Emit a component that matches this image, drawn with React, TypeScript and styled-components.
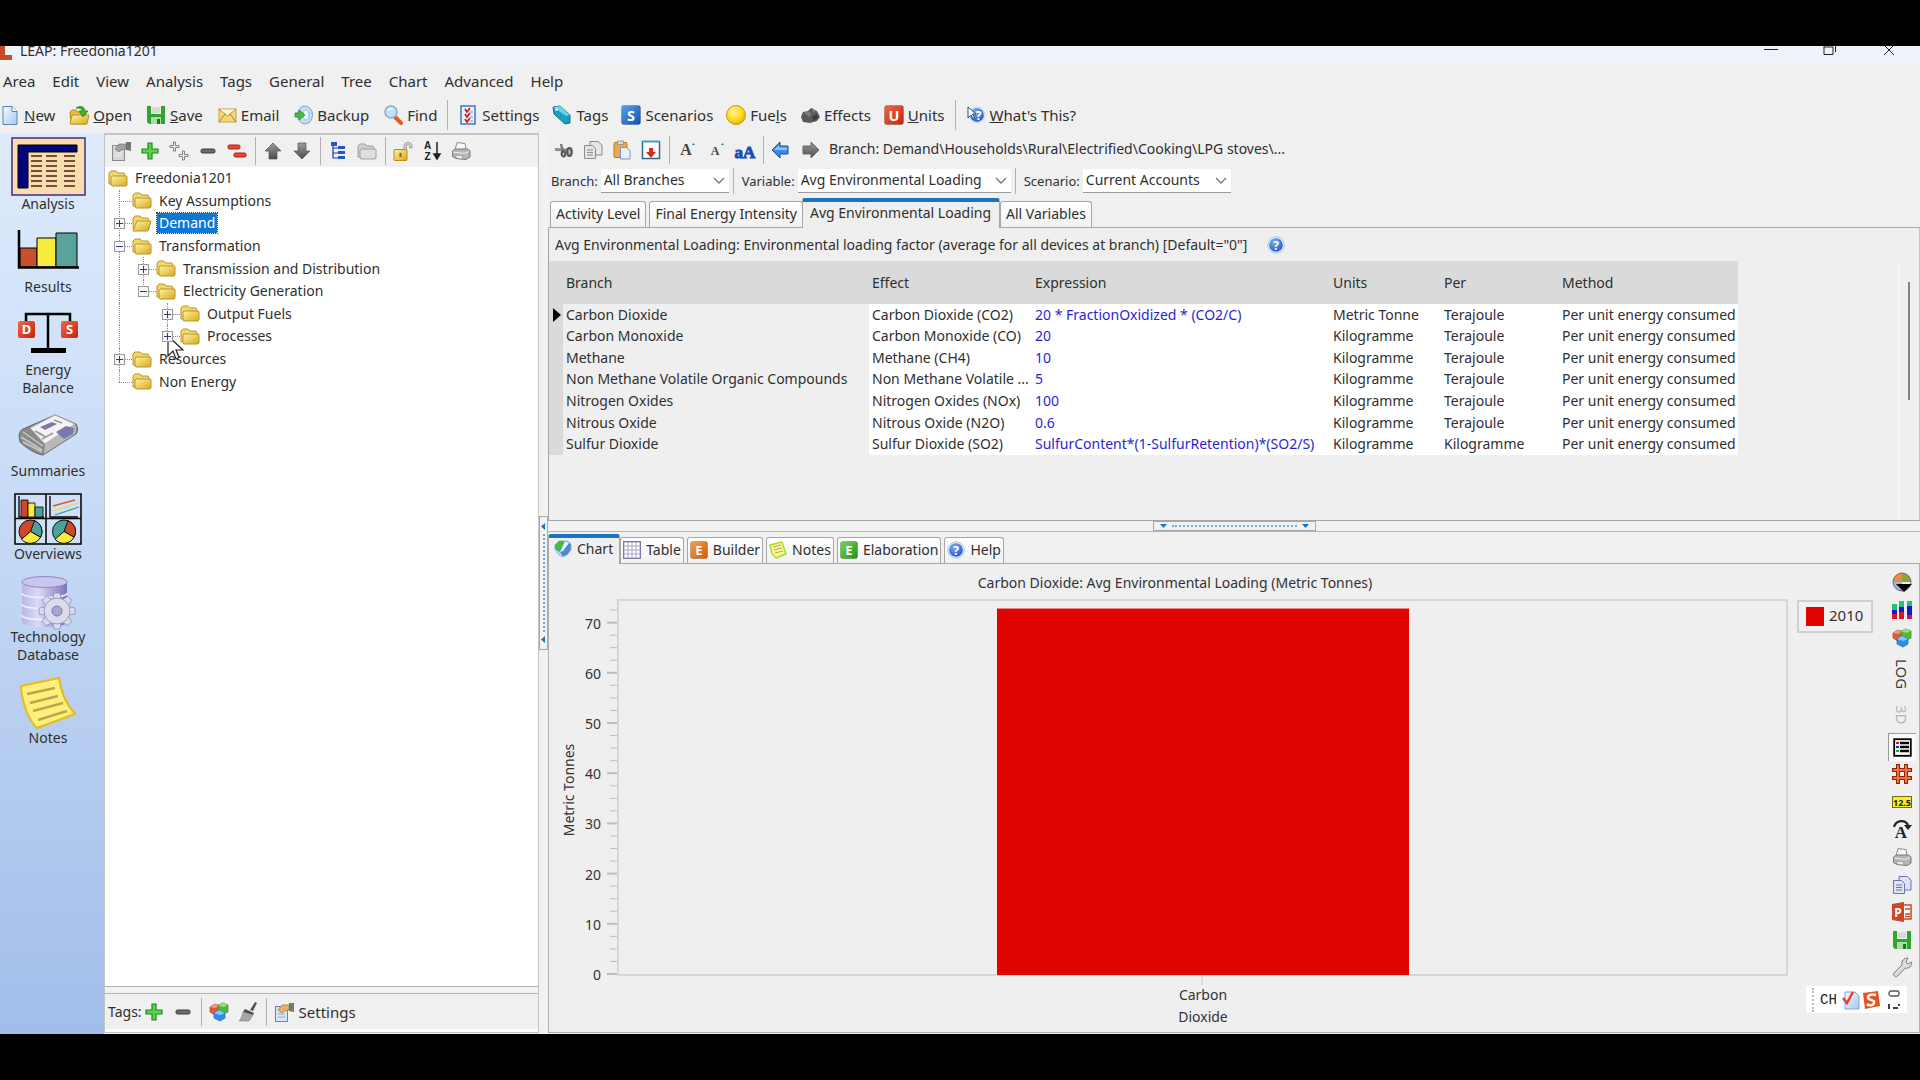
import React from "react";
import styled, { createGlobalStyle, css } from "styled-components";

const GlobalStyle = createGlobalStyle`
  *, *::before, *::after { box-sizing: border-box; }
  body {
    margin: 0;
    background: #000;
    color: #2f2f2f;
    font-family: "Noto Sans", "Open Sans", sans-serif;
    font-size: 14px;
    line-height: 18px;
  }
  button, select { font: inherit; color: inherit; }
  button { border: 0; padding: 0; background: none; }
`;

const line = "#b4b4b4";
const face = "#efefef";

/* ---------- window frame ---------- */

const Screen = styled.div`
  height: 100vh;
  padding: 46px 0;
  background: #000;
`;

const Window = styled.div`
  height: 100%;
  display: flex;
  flex-direction: column;
  background: #f0f0f0;
  overflow: hidden;
  position: relative;
`;

const TitleBar = styled.header`
  flex: none;
  display: flex;
  justify-content: space-between;
  height: 20px;
  padding-right: 2px;
  background: #eff3f9;
  overflow: hidden;
`;

const TitleLabel = styled.h1`
  display: flex;
  gap: 8px;
  margin: 0;
  font-size: 14px;
  font-weight: 400;
  line-height: 10px;
`;

const WindowButtons = styled.div`
  display: flex;
  button { width: 59px; height: 10px; display: flex; justify-content: center; }
`;

const MenuBar = styled.nav`
  flex: none;
  display: flex;
  align-items: center;
  gap: 17px;
  height: 30px;
  padding-left: 3px;
  font-size: 15px;
`;

const MainToolbar = styled.div`
  flex: none;
  display: flex;
  align-items: center;
  gap: 10px;
  height: 37px;
  font-size: 15px;
`;

const ButtonGroup = styled.div<{ $gap: number }>`
  display: flex;
  align-items: center;
  gap: ${(p) => p.$gap}px;
`;

const LabelButton = styled.button<{ $gap?: number }>`
  display: flex;
  align-items: center;
  gap: ${(p) => p.$gap ?? 4}px;
  font-size: 15px;
  white-space: nowrap;
`;

const MainSeparator = styled.span`
  width: 1px;
  height: 30px;
  background: #b0b0b0;
`;

const Separator = styled.span`
  flex: none;
  width: 1px;
  height: 28px;
  margin: 0 -2px 0 -1px;
  background: #b0b0b0;
`;

const Body = styled.div`
  flex: 1;
  min-height: 0;
  display: flex;
`;

/* ---------- view bar ---------- */

const ViewBar = styled.nav`
  flex: none;
  width: 104px;
  padding: 4px 17px 0 9px;
  display: flex;
  flex-direction: column;
  align-items: center;
  gap: 13px;
  background: linear-gradient(#deeafb, #cbdef8 35%, #a1bde9);
`;

const ViewButton = styled.button`
  display: flex;
  flex-direction: column;
  align-items: center;
  width: 78px;
  line-height: 18px;
  svg { display: block; }
`;

/* ---------- tree pane ---------- */

const TreePane = styled.section`
  flex: none;
  width: 435px;
  display: flex;
  flex-direction: column;
  border: 1px solid ${line};
  border-width: 2px 1px 1px;
  border-color: #c4c4c4;
  margin-bottom: 1px;
`;

const IconBar = styled.div<{ $height: number; $left: number }>`
  flex: none;
  display: flex;
  align-items: center;
  gap: 9px;
  height: ${(p) => p.$height}px;
  padding-left: ${(p) => p.$left}px;
`;

const IconButton = styled.button`
  flex: none;
  width: 20px;
  height: 20px;
  display: grid;
  place-items: center;
`;

const TreeBox = styled.div`
  flex: 1;
  background: #fff;
  padding-left: 3px;
`;

const TreeList = styled.ul`
  list-style: none;
  margin: 0;
  padding: 0;
  height: 226px;
  display: grid;
  grid-auto-rows: 1fr;
`;

const TreeRow = styled.li`
  display: flex;
  align-items: stretch;
`;

const dotted = "1px dotted #8c8c8c";

const Guide = styled.span<{ $kind: string }>`
  position: relative;
  width: 24px;
  &::before {
    content: "";
    position: absolute;
    left: 11px;
    top: 0;
    bottom: ${(p) => (p.$kind === "end" ? "50%" : "0")};
    border-left: ${(p) => (p.$kind === "none" ? "0" : dotted)};
  }
  &::after {
    content: "";
    position: absolute;
    left: 11px;
    right: 0;
    top: 50%;
    border-top: ${(p) => (p.$kind === "tee" || p.$kind === "end" ? dotted : "0")};
  }
`;

const Toggle = styled.button`
  position: absolute;
  z-index: 1;
  left: 6px;
  top: calc(50% - 5px);
  width: 11px;
  height: 11px;
  border: 1px solid #9a9a9a;
  background: #f6f6f8;
  display: grid;
  place-items: center;
`;

const FolderSlot = styled.span`
  display: flex;
  align-items: center;
  width: 25px;
`;

const NodeLabel = styled.span<{ $selected?: boolean }>`
  align-self: center;
  line-height: 20px;
  padding: 0 2px;
  ${(p) =>
    p.$selected &&
    css`
      background: #0f78d4;
      color: #fff;
      outline: 1px dotted #21405e;
    `}
`;

const TreeSplitter = styled.div`
  flex: none;
  height: 8px;
  border: 1px solid ${line};
  border-width: 1px 0;
  background: #f3f3f3;
`;

const WhiteStrip = styled.div`
  flex: none;
  height: 3px;
  background: #fff;
`;

const TagsLabel = styled.span`
  margin-right: -7px;
`;

const Pointer = styled.svg`
  position: absolute;
  left: 167px;
  top: 289px;
`;

/* ---------- splitters ---------- */

const VerticalSplitter = styled.div`
  flex: none;
  width: 9px;
  padding-top: 383px;
  background: #f2f2f2;
`;

const VerticalGrip = styled.div`
  width: 9px;
  height: 134px;
  padding: 6px 0;
  border: 1px solid #a9a9a9;
  display: flex;
  flex-direction: column;
  align-items: center;
  gap: 4px;
  i { flex: 1; border-left: 2px dotted #6fa6d2; }
`;

const HorizontalSplitter = styled.div`
  flex: none;
  height: 10px;
  display: flex;
  justify-content: center;
  background: #f2f2f2;
`;

const HorizontalGrip = styled.div`
  width: 163px;
  height: 10px;
  padding: 0 6px;
  border: 1px solid #a9a9a9;
  display: flex;
  align-items: center;
  gap: 5px;
  i { flex: 1; border-top: 2px dotted #6fa6d2; }
`;

/* ---------- right side ---------- */

const Main = styled.main`
  flex: 1;
  min-width: 0;
  display: flex;
  flex-direction: column;
`;

const DataPane = styled.section`
  flex: none;
  height: 388px;
  display: flex;
  flex-direction: column;
`;

const Path = styled.span`
  padding-bottom: 2px;
  white-space: nowrap;
`;

const FilterRow = styled.div`
  flex: none;
  display: flex;
  align-items: center;
  height: 30px;
  padding-left: 3px;
`;

const FilterSeparator = styled.span`
  width: 1px;
  height: 26px;
  margin: 0 8px 0 4px;
  background: #b0b0b0;
`;

const FilterLabel = styled.label`
  font-size: 13px;
  margin-right: 3px;
`;

const SelectBox = styled.span<{ $width: number }>`
  position: relative;
  width: ${(p) => p.$width}px;
  height: 24px;
  select {
    appearance: none;
    width: 100%;
    height: 24px;
    padding: 0 20px 2px 3px;
    border: 0;
    border-bottom: 1px solid #9b9b9b;
    border-radius: 0;
    background: #fff;
  }
  svg { position: absolute; right: 4px; top: 8px; pointer-events: none; }
`;

const TabRow = styled.div<{ $inset?: number }>`
  flex: none;
  display: flex;
  align-items: flex-end;
  gap: 3px;
  height: 32px;
  padding-left: ${(p) => p.$inset ?? 0}px;
  border-bottom: 1px solid #a6a6a6;
`;

const TabButton = styled.button<{ $active?: boolean; $compact?: boolean }>`
  display: flex;
  align-items: center;
  gap: 5px;
  height: 26px;
  padding: 0 ${(p) => (p.$compact ? 2 : 5)}px 1px;
  white-space: nowrap;
  border: 1px solid #a6a6a6;
  border-bottom: 0;
  border-radius: 3px 3px 0 0;
  background: linear-gradient(#fff, #f1f1f1);
  ${(p) =>
    p.$active &&
    css`
      height: 30px;
      margin: 0 -3px -1px -4px;
      padding: 0 8px 4px 7px;
      border-top: 4px solid #1b72bd;
      background: ${face};
      &:first-child { margin-left: 0; padding: 0 6px 5px 5px; }
    `}
`;

const DataSheet = styled.div`
  flex: 1;
  min-height: 0;
  display: flex;
  justify-content: space-between;
  border-left: 1px solid #a6a6a6;
  border-right: 1px solid #c4c4c4;
  border-bottom: 1px solid #a6a6a6;
  background: ${face};
`;

const SheetColumn = styled.div`
  display: flex;
  flex-direction: column;
`;

const Description = styled.p`
  display: flex;
  align-items: center;
  gap: 20px;
  height: 33px;
  margin: 0;
  padding-left: 6px;
  white-space: nowrap;
`;

const Grid = styled.table`
  width: 1189px;
  height: 194px;
  table-layout: fixed;
  border-collapse: collapse;
  line-height: 20px;
  thead { background: #dadada; }
  thead tr { height: 43px; }
  tbody tr { height: 21px; }
  th, td {
    padding: 0 0 0 3px;
    text-align: left;
    font-weight: 400;
    white-space: nowrap;
    overflow: hidden;
    background: #fff;
  }
  thead th { background: #dadada; }
  td:first-child { background: #dadada; }
  tbody th { background: ${face}; }
  td svg { display: block; }
`;

const Expression = styled.td`
  color: #2a1fd6;
`;

const ScrollTrack = styled.div`
  width: 21px;
  margin-top: 33px;
  padding: 21px 0 0 9px;
  border-left: 1px solid #fafafa;
`;

const ScrollThumb = styled.div`
  width: 2px;
  height: 118px;
  background: #858585;
`;

const ChartPane = styled.section`
  flex: 1;
  min-height: 0;
  display: flex;
  flex-direction: column;
  border-top: 1px solid ${line};
`;

const ChartBody = styled.div`
  flex: 1;
  min-height: 0;
  display: flex;
  align-items: flex-start;
  border: 1px solid #b0b0b0;
  border-top: 0;
  margin-bottom: 1px;
  background: ${face};
`;

const ChartSvg = styled.svg`
  flex: 1;
  min-width: 0;
  display: block;
  font-size: 14px;
  fill: #333;
`;

const ChartTools = styled.div`
  flex: none;
  width: 31px;
  padding-top: 4px;
  display: flex;
  flex-direction: column;
`;

const ToolButton = styled.button<{ $height?: number; $pressed?: boolean; $muted?: boolean }>`
  display: grid;
  place-items: center;
  width: 28px;
  height: ${(p) => (p.$height ? `${p.$height}px` : "auto")};
  color: ${(p) => (p.$muted ? "#b5b5b5" : "#3c3c3c")};
  background: ${(p) => (p.$pressed ? "#fafafa" : "none")};
  box-shadow: ${(p) => (p.$pressed ? "inset 1px 1px 0 #9b9b9b" : "none")};
  span { writing-mode: vertical-rl; line-height: 20px; font-size: 15px; }
`;

const ToolGroup = styled.div`
  height: 248px;
  display: grid;
  grid-auto-rows: 1fr;
`;

const ImeBar = styled.div`
  position: absolute;
  right: 13px;
  bottom: 21px;
  width: 101px;
  height: 27px;
  padding-left: 6px;
  display: flex;
  align-items: center;
  background: #fff;
  font-family: "Liberation Mono", monospace;
  font-size: 14px;
  color: #222;
  i { height: 24px; border-left: 2px dotted #bbb; margin-right: 6px; }
  svg { margin-left: 5px; }
  svg + svg { margin-left: 1px; }
  svg + svg + svg { margin-left: 7px; }
`;

/* ---------- icons ---------- */

type IconProps = { w?: number; h?: number; box?: string; children: React.ReactNode };
const Svg = ({ w = 20, h = 20, box, children }: IconProps) => (
  <svg width={w} height={h} viewBox={box ?? `0 0 ${w} ${h}`} overflow="visible" aria-hidden="true">
    {children}
  </svg>
);

const GradientDefs = styled.svg`
  position: absolute;
`;

const Gradients = () => (
  <GradientDefs width="0" height="0" aria-hidden="true">
    <defs>
      <linearGradient id="gold" x1="0" y1="0" x2="1" y2="1">
        <stop offset="0" stopColor="#fff3a0" /><stop offset="1" stopColor="#d9a81e" />
      </linearGradient>
      <linearGradient id="grey" x1="0" y1="0" x2="0" y2="1">
        <stop offset="0" stopColor="#9c9c9c" /><stop offset="1" stopColor="#4c4c4c" />
      </linearGradient>
      <linearGradient id="paper" x1="0" y1="0" x2="1" y2="1">
        <stop offset="0" stopColor="#f5faff" /><stop offset="1" stopColor="#a8c8ef" />
      </linearGradient>
      <linearGradient id="orange" x1="0" y1="0" x2="1" y2="1">
        <stop offset="0" stopColor="#f7a04a" /><stop offset="1" stopColor="#d65a00" />
      </linearGradient>
      <linearGradient id="red" x1="0" y1="0" x2="1" y2="1">
        <stop offset="0" stopColor="#ef6a4a" /><stop offset="1" stopColor="#c8200a" />
      </linearGradient>
      <linearGradient id="blue" x1="0" y1="0" x2="1" y2="1">
        <stop offset="0" stopColor="#5aa0e8" /><stop offset="1" stopColor="#0a55b0" />
      </linearGradient>
      <linearGradient id="green" x1="0" y1="0" x2="1" y2="1">
        <stop offset="0" stopColor="#7bd65a" /><stop offset="1" stopColor="#1f9410" />
      </linearGradient>
      <linearGradient id="violet" x1="0" y1="0" x2="1" y2="0">
        <stop offset="0" stopColor="#b9b6e6" /><stop offset=".35" stopColor="#dcdaf6" /><stop offset="1" stopColor="#7b76b8" />
      </linearGradient>
      <radialGradient id="sun" cx=".4" cy=".35" r=".7">
        <stop offset="0" stopColor="#fff59a" /><stop offset=".6" stopColor="#ffd91f" /><stop offset="1" stopColor="#e0a800" />
      </radialGradient>
      <radialGradient id="ball" cx=".4" cy=".3" r=".8">
        <stop offset="0" stopColor="#7ab0f5" /><stop offset="1" stopColor="#1c4fc0" />
      </radialGradient>
    </defs>
  </GradientDefs>
);

const Badge = ({ letter, fill, size = 18 }: { letter: string; fill: string; size?: number }) => (
  <Svg w={size} h={size} box="0 0 18 18">
    <rect x=".5" y=".5" width="17" height="17" rx="2" fill={`url(#${fill})`} stroke="#0003" />
    <text x="9" y="14" textAnchor="middle" fontSize="13" fontWeight="700" fill="#fff">{letter}</text>
  </Svg>
);

const NewIcon = () => (
  <Svg><path d="M3 1.500h9l5 5v13H3z" fill="url(#paper)" stroke="#5b84bd" /><path d="M12 1.500v5h5" fill="#fff" stroke="#5b84bd" /></Svg>
);
const OpenIcon = () => (
  <Svg><path d="M1 7l2-2h4l2 2h8v12H2z" fill="#e8bd3f" stroke="#b98a18" /><path d="M1 19l2-9h17l-2 9z" fill="url(#gold)" stroke="#c39622" /><path d="M7 3c5-3 9-1 9 3h3l-5 6-4-6h3c0-2-2-3-6-3z" fill="#35b535" stroke="#1d7d1d" strokeWidth=".7" /></Svg>
);
const SaveIcon = () => (
  <Svg><path d="M1 1h18v18H3l-2-2z" fill="#2ea52e" /><path d="M5 1h10v8H5z" fill="#eef4ee" /><path d="M6 3h8M6 5h8M6 7h8" stroke="#b9c4b9" /><path d="M5 12h10v7H5z" fill="#a9dba9" /><path d="M11 14h3v5h-3z" fill="#187a18" /></Svg>
);
const EmailIcon = () => (
  <Svg><rect x="2" y="4" width="17" height="13" fill="#f6d878" stroke="#bfa14e" /><path d="M2 4l8.500 7L19 4M2 17l6-8M19 17l-6-8" fill="none" stroke="#b07f2c" /><path d="M3 4.500h15l-7.500 6z" fill="#fff4cc" /></Svg>
);
const BackupIcon = () => (
  <Svg><ellipse cx="12" cy="10" rx="7.500" ry="9" fill="#c5dcf5" stroke="#7da4cf" /><ellipse cx="13" cy="10" rx="3" ry="5" fill="#eef6ff" stroke="#9fbfe2" /><path d="M2 8h4V5l6 5-6 5v-3H2z" fill="#3fc03f" stroke="#1e7f1e" strokeWidth=".7" /></Svg>
);
const FindIcon = () => (
  <Svg><path d="M11 11l7 7" stroke="#e25f1f" strokeWidth="4" strokeLinecap="round" /><circle cx="8" cy="7" r="6" fill="#bfe0fb" stroke="#8fa9c6" strokeWidth="1.500" /><path d="M4.500 6c1-2 3-3 5-2" stroke="#fff" strokeWidth="1.500" fill="none" /></Svg>
);
const ChecklistIcon = () => (
  <Svg><rect x="3" y="1" width="14" height="18" fill="#e9f2fc" stroke="#3f78c4" strokeWidth="1.500" /><path d="M7 4l2 3 3-4M7 9l2 3 3-4M7 14l2 3 3-4" fill="none" stroke="#d3201b" strokeWidth="1.800" /><path d="M12 7h3M12 12h3M12 16h3" stroke="#7c9ac0" /></Svg>
);
const TagIcon = () => (
  <Svg><path d="M1 2l7-1 10 9v8l-5 1L2 9z" fill="#1f9dbd" stroke="#0b6f8b" /><path d="M1 2l7-1 10 9-4 1z" fill="#65d3e6" /><circle cx="4.500" cy="4.500" r="1.300" fill="#fff" /></Svg>
);
const FuelIcon = () => (
  <Svg w={20} h={20}><circle cx="10" cy="10" r="9.500" fill="url(#sun)" stroke="#c99a1a" /></Svg>
);
const RockIcon = () => (
  <Svg><path d="M1 12l2-5 5-1 3-3 6 3 3 6-3 4-7 2-7-1z" fill="#595959" /><path d="M4 8l4-2 4 3-3 3zM12 3l4 3-3 2z" fill="#7c7c7c" /><path d="M12 12l5-3 1 3-4 4z" fill="#3c3c3c" /></Svg>
);
const HelpIcon = ({ size = 18 }: { size?: number }) => (
  <Svg w={size} h={size} box="0 0 18 18"><circle cx="9" cy="9" r="8.300" fill="#dfe9f8" stroke="#b6c8e4" /><circle cx="9" cy="9" r="6.800" fill="url(#ball)" /><text x="9" y="13.500" textAnchor="middle" fontSize="12" fontWeight="700" fill="#fff">?</text></Svg>
);
const WhatsThisIcon = () => (
  <Svg><circle cx="11" cy="10" r="8.300" fill="#c9daf3" /><circle cx="11" cy="10" r="6.800" fill="url(#ball)" /><path d="M2 2v11l3-3 2 4 1.500-1-2-4H10z" fill="#fff" stroke="#34496e" /><text x="12.500" y="14.500" textAnchor="middle" fontSize="12" fontWeight="700" fill="#fff">?</text></Svg>
);
const PropertiesIcon = ({ color = false }: { color?: boolean }) => (
  <Svg><rect x="1.500" y="4.500" width="12" height="15" fill={color ? "#d5e6fa" : "#d6d6d6"} stroke={color ? "#5f86c0" : "#8a8a8a"} /><path d="M4 12h7M4 15h7" stroke={color ? "#8fb0dc" : "#f4f4f4"} /><path d="M4 8l4-5h7v5l-5 1-2 2z" fill={color ? "#eab25a" : "#a2a2a2"} stroke={color ? "#a8712a" : "#7a7a7a"} strokeWidth=".7" /><path d="M15 1h5v9l-5-1z" fill="#777" /></Svg>
);
const PlusIcon = () => (
  <Svg><path d="M8 2h4v6h6v4h-6v6H8v-6H2V8h6z" fill="#5bd24a" stroke="#1c8a1c" strokeWidth="1.200" /></Svg>
);
const PlusManyIcon = () => (
  <Svg><path d="M4.500 1h2v3.500H10v2H6.500V10h-2V6.500H1v-2h3.500zM13.500 10h2v3.500H19v2h-3.500V19h-2v-3.500H10v-2h3.500z" fill="#ececec" stroke="#777" strokeWidth=".9" /></Svg>
);
const MinusIcon = () => (
  <Svg><rect x="3" y="8" width="14" height="4" rx="1.500" fill="#6b6b6b" stroke="#3e3e3e" /></Svg>
);
const MinusManyIcon = () => (
  <Svg><rect x="1" y="4" width="12" height="4" rx="1.500" fill="#e4483a" stroke="#b02015" /><rect x="7" y="12" width="12" height="4" rx="1.500" fill="#e4483a" stroke="#b02015" /></Svg>
);
const UpIcon = () => (
  <Svg><path d="M10 2l8 8h-4v8H6v-8H2z" fill="url(#grey)" stroke="#555" strokeWidth=".7" /></Svg>
);
const DownIcon = () => (
  <Svg><path d="M10 18l8-8h-4V2H6v8H2z" fill="url(#grey)" stroke="#555" strokeWidth=".7" /></Svg>
);
const HierarchyIcon = () => (
  <Svg><path d="M5 4v13h5M5 7h5M5 12h5" fill="none" stroke="#1b3ea0" strokeWidth="1.200" /><path d="M3 1h6v4H3zM10 5h7v3h-7zM10 10h7v3h-7zM10 15h7v3h-7z" fill="#2557c9" /></Svg>
);
const Folder = ({ open = false, grey = false }: { open?: boolean; grey?: boolean }) => (
  <Svg w={20} h={17}>
    <path d="M1 14V3l2-2h5l2 2h6l1 2v9z" fill={grey ? "#cfcfcf" : "#f1d765"} stroke={grey ? "#a0a0a0" : "#b8962c"} />
    {open
      ? <path d="M1 16l4-10h14l-3 10z" fill="url(#gold)" stroke="#b8962c" />
      : <path d="M4 6h14.500l.5 1v8l-1 1H4l-1-1V7z" fill={grey ? "#dedede" : "url(#gold)"} stroke={grey ? "#a0a0a0" : "#b8962c"} />}
  </Svg>
);
const LockIcon = () => (
  <Svg><path d="M11 9V5c0-5 8-5 8 0v2h-2.500V5c0-2-3-2-3 0v4" fill="#cfcfcf" stroke="#909090" strokeWidth=".8" /><rect x="1" y="8.500" width="13" height="11" rx="1" fill="url(#gold)" stroke="#c08d10" /><rect x="6.500" y="12" width="2" height="4" fill="#8a6412" /></Svg>
);
const SortIcon = () => (
  <Svg><text x="5.500" y="8" textAnchor="middle" fontFamily="Liberation Sans" fontSize="10" fontWeight="700" fill="#222">A</text><text x="5.500" y="19" textAnchor="middle" fontFamily="Liberation Sans" fontSize="10" fontWeight="700" fill="#222">Z</text><path d="M15 1v15M12 13l3 5 3-5z" stroke="#222" strokeWidth="1.500" fill="#222" /></Svg>
);
const PrinterIcon = () => (
  <Svg><path d="M4 9L6 1.500l8 1L15 9z" fill="#f5f8fb" stroke="#8c8c8c" /><path d="M1.500 10l3-2h12l2.500 2v6l-4 2.500-10-1-3.500-2z" fill="#b5b5b5" stroke="#777" /><path d="M2 11l11 1.500 5-2" fill="none" stroke="#eee" /><path d="M5 14l7 1-1 3-6-1z" fill="#efefef" stroke="#888" strokeWidth=".6" /></Svg>
);
const CutIcon = () => (
  <Svg><path d="M1 9.500l12 .5" stroke="#8d8d8d" strokeWidth="3" /><path d="M7 4l2 8" stroke="#777" strokeWidth="2.500" /><ellipse cx="9.500" cy="14" rx="2" ry="2.500" fill="#b5b5b5" stroke="#555" strokeWidth="1.800" /><ellipse cx="15.500" cy="12" rx="2.300" ry="4" fill="#b5b5b5" stroke="#555" strokeWidth="2" /></Svg>
);
const CopyIcon = ({ tint = "#8a8a8a", paper = "#e6e6e6" }: { tint?: string; paper?: string }) => (
  <Svg><path d="M7 1.500h8l4 3.500v10H7z" fill={paper} stroke={tint} /><path d="M1.500 5.500h8l3 3v10h-11z" fill={paper} stroke={tint} /><path d="M4 10h6M4 12.500h6M4 15h6" stroke={tint} /></Svg>
);
const PasteIcon = () => (
  <Svg><rect x="2" y="2.500" width="13" height="15" rx="1" fill="#eaa955" stroke="#b87a26" /><rect x="5.500" y="1" width="6" height="3.500" fill="#d8d8d8" stroke="#888" strokeWidth=".7" /><path d="M8.500 7.500h6l3.500 3V19H8.500z" fill="#e9f0fb" stroke="#7d97bf" /></Svg>
);
const ImportIcon = () => (
  <Svg><rect x="1.500" y="1.500" width="17" height="17" fill="#fff" stroke="#2f6c86" strokeWidth="1.500" /><path d="M1.500 1.500h17" stroke="#56b7c9" strokeWidth="2" strokeDasharray="2 1" /><path d="M8 8h4v4h3l-5 6-5-6h3z" fill="#d92b1c" /></Svg>
);
const FontIcon = ({ size }: { size: number }) => (
  <Svg><text x="9" y="15" textAnchor="middle" fontFamily="Liberation Serif" fontSize={size} fontWeight="700" fill="#444">A</text><path d="M15 5l1.500-2L18 5z" fill="#2f6fc0" /></Svg>
);
const CaseIcon = () => (
  <Svg><text x="10" y="18" textAnchor="middle" fontFamily="Liberation Serif" fontSize="17" fontWeight="700" fill="#1551b5" stroke="#1551b5">aA</text></Svg>
);
const BackIcon = () => (
  <Svg><path d="M1 10l8-8v4h8v8H9v4z" fill="#3c8ade" stroke="#1a4f9c" /><path d="M3 10l5-5v2.500h8V10z" fill="#8cc3f7" /></Svg>
);
const ForwardIcon = () => (
  <Svg><path d="M19 10l-8-8v4H3v8h8v4z" fill="url(#grey)" stroke="#666" /></Svg>
);
const CubesIcon = () => (
  <Svg>
    <path d="M1 5l5-3 5 2v6l-5 3-5-3z" fill="#e4593a" stroke="#b23a20" strokeWidth=".7" /><path d="M1 5l5-3 5 2-5 2z" fill="#f59a80" />
    <path d="M9 3l5-2 5 2v7l-5 2-5-2z" fill="#4fb93c" stroke="#2f8a20" strokeWidth=".7" /><path d="M9 3l5-2 5 2-5 2z" fill="#9be27c" />
    <path d="M5 11l5-3 6 3v5l-5 3-6-3z" fill="#2f8fec" stroke="#1a62b4" strokeWidth=".7" /><path d="M5 11l5-3 6 3-5 2z" fill="#86c6fb" />
  </Svg>
);
const BrushIcon = () => (
  <Svg><path d="M17 0l2 1-4 8-3-1z" fill="#555" /><path d="M7 7l9 4-1 2-10-3z" fill="#4a4a4a" /><path d="M5 10l10 3-4 6H1c2-2 3-5 4-9z" fill="#a6a6a6" stroke="#808080" strokeWidth=".6" /></Svg>
);
const NotesTabIcon = () => (
  <Svg w={18} h={18}><path d="M1 4l12-3 4 12-10 4-4-4z" fill="#f7f59a" stroke="#9ddb2c" strokeWidth="1.400" /><path d="M4 6l8-2M5 9l8-2M6 12l8-2" stroke="#b3a84a" /></Svg>
);
const GlobeIcon = () => (
  <Svg w={18} h={18}><path d="M1 5l4-4h8l4 3v6l-4 5-5 2-4-3-3-5z" fill="#4a88d8" stroke="#8fa6c4" strokeWidth=".8" /><path d="M1 5l4-4h6L6 11 2 9z" fill="#3fc03c" /><path d="M11 1l4 2-6 8-3 1z" fill="#e6f5ff" /><path d="M1 9l5 3 3 5-1 0-4-3z" fill="#a9d6f5" /></Svg>
);
const TableTabIcon = () => (
  <Svg w={18} h={18}><rect x=".7" y=".7" width="16.600" height="16.600" fill="#fff" stroke="#77739a" strokeWidth="1.300" /><path d="M5 1v16M9 1v16M13 1v16M1 5h16M1 9h16M1 13h16" stroke="#a7a4c6" /></Svg>
);

const PieMenuIcon = () => (
  <Svg><path d="M10 10V1a9 9 0 0 0-9 9z" fill="#ee8b4b" /><path d="M10 10h9a9 9 0 0 0-9-9z" fill="#8aa83a" /><path d="M10 10H1a9 9 0 0 0 9 9z" fill="#9db4e6" /><circle cx="10" cy="10" r="9" fill="none" stroke="#6c6c6c" /><path d="M4 12h16l-8 8z" fill="#000" /></Svg>
);
const StackedIcon = () => (
  <Svg><path d="M0 4h5v6H0zM7 1h5v6H7zM15 1h5v5h-5z" fill="#1fc47a" /><path d="M0 10h5v4H0zM7 7h5v5H7zM15 6h5v9h-5z" fill="#1218d8" /><path d="M0 14h5v5H0zM7 12h5v7H7zM15 15h5v4h-5z" fill="#e01326" /></Svg>
);
const LegendIcon = () => (
  <Svg><rect x="2.200" y="2.200" width="16.600" height="16.600" fill="#fff" stroke="#000" strokeWidth="1.800" /><path d="M8 6h9M8 10h9M8 14h9" stroke="#000" strokeWidth="2.500" /><path d="M4 6h3" stroke="#d11" strokeWidth="2" /><path d="M4 10h3" stroke="#22c" strokeWidth="2" /><path d="M4 14h3" stroke="#1b3" strokeWidth="2" /></Svg>
);
const HashIcon = () => (
  <Svg><path d="M6 0v20M14 0v20M0 6h20M0 14h20" stroke="#8c2410" strokeWidth="4" /><path d="M6 1v18M14 1v18M1 6h18M1 14h18" stroke="#f4713c" strokeWidth="2" /></Svg>
);
const DecimalsIcon = () => (
  <Svg w={20} h={12}><rect x=".5" y=".5" width="19" height="11" fill="#f5f01e" stroke="#6d6b1a" /><text x="10" y="9.500" textAnchor="middle" fontSize="9" fontWeight="700" fill="#222">12.5</text></Svg>
);
const RotateTextIcon = () => (
  <Svg><path d="M2 8C4 1 13 0 16 6" fill="none" stroke="#222" strokeWidth="2.200" /><path d="M12 6h8l-4 5z" fill="#222" /><text x="9" y="19" textAnchor="middle" fontFamily="Liberation Serif" fontSize="17" fontWeight="700" fill="#222">A</text></Svg>
);
const SlidesIcon = () => (
  <Svg><path d="M11 3h8v14h-8z" fill="#fff" stroke="#cf4526" strokeWidth="1.500" /><path d="M13 7h5M13 12h5M13 14.500h5" stroke="#cf4526" strokeWidth="1.500" /><path d="M0 2l12-2v20L0 18z" fill="#cf4526" /><text x="6" y="14.500" textAnchor="middle" fontSize="12" fontWeight="700" fill="#fff">P</text></Svg>
);
const WrenchIcon = () => (
  <Svg><path d="M2 16l8-8c-1-4 2-7 6-7l-2 4 2 2 3.500-2c1 4-3 7-6 6l-8 8c-2 2-5-1-3.500-3z" fill="#dcdcdc" stroke="#7b7b7b" /></Svg>
);

/* view bar pictures */
const AnalysisArt = () => (
  <Svg w={75} h={58}>
    <rect x="1" y="1" width="73" height="57" fill="#fbdcae" stroke="#3b2f86" strokeWidth="1.500" />
    <path d="M7 8h59v7H17v36H7z" fill="#04047a" stroke="#000" />
    <path d="M20 19h11M20 24h11M20 29h11M20 34h11M20 39h11M20 44h11M20 49h11M35 19h11M35 24h11M35 29h11M35 34h11M35 39h11M35 44h11M35 49h11M53 19h11M53 24h11M53 29h11M53 34h11M53 39h11M53 44h11M53 49h11" stroke="#6e5238" strokeWidth="2" />
  </Svg>
);
const ResultsArt = () => (
  <Svg w={62} h={52}>
    <g stroke="#000"><path d="M3 22h17v19H3z" fill="#c5512f" /><path d="M20 12h19v29H20z" fill="#f7ec3d" /><path d="M39 7h21v34H39z" fill="#5aa39c" /></g>
    <path d="M2 4v37.500h60" fill="none" stroke="#000" strokeWidth="2.500" />
  </Svg>
);
const BalanceArt = () => (
  <Svg w={62} h={52}>
    <path d="M9 14V5h44v9M31 5v36" fill="none" stroke="#000" strokeWidth="2.500" />
    <path d="M14 39h35v5H14z" fill="#000" />
    <rect x="1" y="12" width="17" height="17" rx="2" fill="url(#red)" /><rect x="44" y="12" width="17" height="17" rx="2" fill="url(#red)" />
    <g fill="#fff" fontSize="13" fontWeight="700" textAnchor="middle"><text x="9.500" y="25">D</text><text x="52.500" y="25">S</text></g>
  </Svg>
);
const SummariesArt = () => (
  <Svg w={60} h={52}>
    <path d="M1 26c0-4 2-6 4-7L37 5l21 9c2 3 2 7 0 10L25 45c-8-1-18-8-23-13z" fill="#8a8a8a" stroke="#666" />
    <path d="M12 18L37 5l20 9-30 20z" fill="#f3f3f3" stroke="#aaa" />
    <path d="M27 34l30-20c2 3 1 7 0 10L26 44z" fill="#b9b9b9" />
    <path d="M5 22l20 14M3 27l21 13M5 32l19 10" stroke="#c9c9c9" strokeWidth="1.500" />
    <path d="M22 17l12-5 5 2-12 6zM38 22l10-6 8 2-1 6-9 5z" fill="#7c78ad" />
    <path d="M17 21l8 4M24 29l11-6M20 23l8 4M36 10l8 3" stroke="#9b9b9b" strokeWidth="1.500" />
  </Svg>
);
const OverviewsArt = () => (
  <Svg w={68} h={52}>
    <rect x="1" y="1" width="66" height="50" fill="#cfe0f8" stroke="#000" strokeWidth="1.500" /><path d="M32 1v50M1 25.500h66" stroke="#000" strokeWidth="1.500" />
    <path d="M5 3v21h25" fill="none" stroke="#000" strokeWidth="1.300" />
    <g stroke="#000" strokeWidth=".8"><path d="M7 7h7v17H7z" fill="#d0482a" /><path d="M14 10h7v14h-7z" fill="#f7ec3d" /><path d="M21 14h8v10h-8z" fill="#4aa39a" /></g>
    <path d="M36 3v21h28" fill="none" stroke="#000" strokeWidth="1.300" />
    <path d="M39 13l22-6" stroke="#e0523c" strokeWidth="1.300" /><path d="M39 18l25-8" stroke="#e8df3c" strokeWidth="1.300" /><path d="M41 22l24-8" stroke="#3c9cab" strokeWidth="1.300" />
    <g stroke="#000" strokeWidth=".9">
      <circle cx="16.500" cy="38.500" r="11.500" fill="#d0482a" /><path d="M16.500 38.500l4-10.800a11.500 11.500 0 0 1 6 16.500z" fill="#4aa39a" /><path d="M16.500 38.500l10 5.700a11.500 11.500 0 0 1-19 2z" fill="#f7ec3d" />
      <circle cx="50" cy="38.500" r="11.500" fill="#4aa39a" /><path d="M50 38.500l4-10.800a11.500 11.500 0 0 1 6 16.500z" fill="#d0482a" /><path d="M50 38.500l10 5.700a11.500 11.500 0 0 1-19 2z" fill="#f7ec3d" />
    </g>
  </Svg>
);
const DatabaseArt = () => (
  <Svg w={56} h={52}>
    <path d="M2 6v40c0 7 45 7 45 0V6z" fill="url(#violet)" /><ellipse cx="24.500" cy="6" rx="22.500" ry="5.500" fill="#c9c6ef" stroke="#8d89c4" />
    <path d="M2 17c0 6 45 6 45 0M2 28c0 6 45 6 45 0M2 39c0 6 45 6 45 0" fill="none" stroke="#f1f0ff" strokeWidth="1.500" />
    <g transform="translate(37 35)" fill="#dcdbee" stroke="#8d8ab5" strokeWidth=".8">
      {[0, 45, 90, 135, 180, 225, 270, 315].map((a) => <path key={a} transform={`rotate(${a})`} d="M-4-12l1-6h6l1 6z" />)}
      <circle r="13" />
    </g>
    <circle cx="37" cy="35" r="12" fill="#dcdbee" /><circle cx="37" cy="35" r="5" fill="#a9a6cf" stroke="#7d7aa8" />
  </Svg>
);
const NotesArt = () => (
  <Svg w={58} h={52}>
    <path d="M2 9L40 1c2 15 7 26 16 36L18 51C9 42 3 26 2 9z" fill="#fff07c" stroke="#e8b91c" strokeWidth="2" />
    <path d="M8 17l28-6M11 26l28-7M14 34l30-8M19 43l29-9" stroke="#c2a54a" strokeWidth="2.500" />
  </Svg>
);

/* ---------- data ---------- */

const menus = ["Area", "Edit", "View", "Analysis", "Tags", "General", "Tree", "Chart", "Advanced", "Help"];

type MainButton = [React.ReactNode, React.ReactNode];
const mainGroups: { gap: number; buttons: MainButton[] }[] = [
  {
    gap: 14,
    buttons: [
      [<NewIcon />, <span><u>N</u>ew</span>],
      [<OpenIcon />, <span><u>O</u>pen</span>],
      [<SaveIcon />, <span><u>S</u>ave</span>],
      [<EmailIcon />, "Email"],
      [<BackupIcon />, "Backup"],
      [<FindIcon />, "Find"],
    ],
  },
  {
    gap: 13,
    buttons: [
      [<ChecklistIcon />, "Settings"],
      [<TagIcon />, "Tags"],
      [<Badge letter="S" fill="blue" size={20} />, "Scenarios"],
      [<FuelIcon />, <span>Fue<u>l</u>s</span>],
      [<RockIcon />, "Effects"],
      [<Badge letter="U" fill="red" size={20} />, <span><u>U</u>nits</span>],
    ],
  },
  { gap: 13, buttons: [[<WhatsThisIcon />, <span><u>W</u>hat's This?</span>]] },
];

const views: [React.ReactNode, string][] = [
  [<AnalysisArt />, "Analysis"],
  [<ResultsArt />, "Results"],
  [<BalanceArt />, "Energy Balance"],
  [<SummariesArt />, "Summaries"],
  [<OverviewsArt />, "Overviews"],
  [<DatabaseArt />, "Technology Database"],
  [<NotesArt />, "Notes"],
];

type Node = { label: string; guides: string[]; toggle?: "+" | "-"; selected?: boolean };
const nodes: Node[] = [
  { label: "Freedonia1201", guides: [] },
  { label: "Key Assumptions", guides: ["tee"] },
  { label: "Demand", guides: ["tee"], toggle: "+", selected: true },
  { label: "Transformation", guides: ["tee"], toggle: "-" },
  { label: "Transmission and Distribution", guides: ["line", "tee"], toggle: "+" },
  { label: "Electricity Generation", guides: ["line", "end"], toggle: "-" },
  { label: "Output Fuels", guides: ["line", "none", "tee"], toggle: "+" },
  { label: "Processes", guides: ["line", "none", "end"], toggle: "+" },
  { label: "Resources", guides: ["tee"], toggle: "+" },
  { label: "Non Energy", guides: ["end"] },
];

const columns = ["Branch", "Effect", "Expression", "Units", "Per", "Method"];
const columnWidths = [14, 306, 163, 298, 111, 118, 179];
const rows = [
  ["Carbon Dioxide", "Carbon Dioxide (CO2)", "20 * FractionOxidized * (CO2/C)", "Metric Tonne", "Terajoule"],
  ["Carbon Monoxide", "Carbon Monoxide (CO)", "20", "Kilogramme", "Terajoule"],
  ["Methane", "Methane (CH4)", "10", "Kilogramme", "Terajoule"],
  ["Non Methane Volatile Organic Compounds", "Non Methane Volatile ...", "5", "Kilogramme", "Terajoule"],
  ["Nitrogen Oxides", "Nitrogen Oxides (NOx)", "100", "Kilogramme", "Terajoule"],
  ["Nitrous Oxide", "Nitrous Oxide (N2O)", "0.6", "Kilogramme", "Terajoule"],
  ["Sulfur Dioxide", "Sulfur Dioxide (SO2)", "SulfurContent*(1-SulfurRetention)*(SO2/S)", "Kilogramme", "Kilogramme"],
];

const filters = [
  { id: "branch", label: "Branch:", value: "All Branches", width: 128 },
  { id: "variable", label: "Variable:", value: "Avg Environmental Loading", width: 213 },
  { id: "scenario", label: "Scenario:", value: "Current Accounts", width: 148 },
];

/* ---------- parts ---------- */

const treeTools: [string, React.ReactNode][][] = [
  [["Properties", <PropertiesIcon />], ["Add", <PlusIcon />], ["Add multiple", <PlusManyIcon />], ["Delete", <MinusIcon />], ["Delete multiple", <MinusManyIcon />]],
  [["Move up", <UpIcon />], ["Move down", <DownIcon />]],
  [["Hierarchy", <HierarchyIcon />], ["Folder", <Folder grey />]],
  [["Lock", <LockIcon />], ["Sort", <SortIcon />], ["Print", <PrinterIcon />]],
];

const editTools: [string, React.ReactNode][][] = [
  [["Cut", <CutIcon />], ["Copy", <CopyIcon />], ["Paste", <PasteIcon />], ["Import", <ImportIcon />]],
  [["Larger font", <FontIcon size={16} />], ["Smaller font", <FontIcon size={12} />], ["Font", <CaseIcon />]],
  [["Back", <BackIcon />], ["Forward", <ForwardIcon />]],
];

const Tools = ({ groups }: { groups: [string, React.ReactNode][][] }) => (
  <>
    {groups.map((group, i) => (
      <React.Fragment key={i}>
        {i > 0 && <Separator />}
        {group.map(([name, icon]) => <IconButton key={name} aria-label={name}>{icon}</IconButton>)}
      </React.Fragment>
    ))}
  </>
);

const Tree = () => (
  <TreeList>
    {nodes.map((n) => (
      <TreeRow key={n.label}>
        {n.guides.map((g, i) => (
          <Guide key={i} $kind={g}>
            {n.toggle && i === n.guides.length - 1 && (
              <Toggle aria-label={`Toggle ${n.label}`}>
                <Svg w={7} h={7}><path d={n.toggle === "+" ? "M0 3.500h7M3.500 0v7" : "M0 3.500h7"} stroke="#333c78" /></Svg>
              </Toggle>
            )}
          </Guide>
        ))}
        <FolderSlot><Folder open={n.selected} /></FolderSlot>
        <NodeLabel $selected={n.selected}>{n.label}</NodeLabel>
      </TreeRow>
    ))}
  </TreeList>
);

const plot = { left: 69, right: 1238, top: 36, bottom: 411, unit: 5.02 };

const Chart = () => {
  const y = (v: number) => plot.bottom - 1 - v * plot.unit;
  const ticks = Array.from({ length: 30 }, (_, i) => i * 2.5);
  return (
    <ChartSvg viewBox="0 0 1339 468" role="img" aria-label="Carbon Dioxide: Avg Environmental Loading">
      <text x="626" y="24" textAnchor="middle">Carbon Dioxide: Avg Environmental Loading (Metric Tonnes)</text>
      <rect x={plot.left} y={plot.top} width={plot.right - plot.left} height={plot.bottom - plot.top} fill="none" stroke="#d6d6d6" strokeWidth="2" />
      {ticks.map((v) => {
        const major = v % 10 === 0;
        return (
          <g key={v}>
            <line x1={major ? 58 : 61} x2="68" y1={y(v)} y2={y(v)} stroke="#bdbdbd" strokeWidth={major ? 2 : 1} />
            {major && <text x="52" y={y(v) + 6} textAnchor="end">{v}</text>}
          </g>
        );
      })}
      <rect x="448" y={y(72.8)} width="412" height={72.8 * plot.unit + 1} fill="#df0400" />
      <line x1="653" x2="653" y1="412" y2="421" stroke="#c8c8c8" />
      <text x="654" y="436" textAnchor="middle">Carbon</text>
      <text x="654" y="458" textAnchor="middle">Dioxide</text>
      <text x="0" y="0" textAnchor="middle" transform="translate(25 226) rotate(-90)">Metric Tonnes</text>
      <rect x="1249" y="37" width="74" height="31" fill="#f1f1f1" stroke="#d0d0d0" strokeWidth="2" />
      <rect x="1257" y="43" width="18" height="19" fill="#df0400" />
      <text x="1280" y="57" fontSize="15">2010</text>
    </ChartSvg>
  );
};

const Arrow = ({ d }: { d: string }) => <Svg w={7} h={7}><path d={d} fill="#1b72bd" /></Svg>;

export default function App() {
  return (
    <>
      <GlobalStyle />
      <Gradients />
      <Screen>
        <Window>
          <TitleBar>
            <TitleLabel>
              <Svg w={12} h={14}><path d="M0 0h5v9h7v5H0z" fill="#c64a24" /></Svg>
              LEAP: Freedonia1201
            </TitleLabel>
            <WindowButtons>
              <button aria-label="Minimize"><Svg w={14} h={10}><path d="M0 3.500h14" stroke="#222" /></Svg></button>
              <button aria-label="Restore"><Svg w={14} h={10}><path d="M1 0v8.500h9V1H1M12.500 0v6" fill="none" stroke="#222" /></Svg></button>
              <button aria-label="Close"><Svg w={14} h={10}><path d="M2-1l10 10M12-1L2 9" stroke="#222" /></Svg></button>
            </WindowButtons>
          </TitleBar>
          <MenuBar>{menus.map((m) => <button key={m}>{m}</button>)}</MenuBar>
          <MainToolbar>
            {mainGroups.map((g, i) => (
              <React.Fragment key={i}>
                {i > 0 && <MainSeparator />}
                <ButtonGroup $gap={g.gap}>
                  {g.buttons.map(([icon, label], j) => <LabelButton key={j}>{icon}{label}</LabelButton>)}
                </ButtonGroup>
              </React.Fragment>
            ))}
          </MainToolbar>

          <Body>
            <ViewBar>
              {views.map(([art, name]) => <ViewButton key={name}>{art}{name}</ViewButton>)}
            </ViewBar>

            <TreePane>
              <IconBar $height={32} $left={6}><Tools groups={treeTools} /></IconBar>
              <TreeBox><Tree /></TreeBox>
              <TreeSplitter />
              <IconBar $height={35} $left={3}>
                <TagsLabel>Tags:</TagsLabel>
                <IconButton aria-label="Add tag"><PlusIcon /></IconButton>
                <IconButton aria-label="Remove tag"><MinusIcon /></IconButton>
                <Separator />
                <IconButton aria-label="Colors"><CubesIcon /></IconButton>
                <IconButton aria-label="Clear"><BrushIcon /></IconButton>
                <Separator />
                <LabelButton $gap={5}><PropertiesIcon color />Settings</LabelButton>
              </IconBar>
              <WhiteStrip />
            </TreePane>

            <VerticalSplitter>
              <VerticalGrip>
                <Arrow d="M5 0v7L1 3.500z" /><i /><Arrow d="M5 0v7L1 3.500z" />
              </VerticalGrip>
            </VerticalSplitter>

            <Main>
              <DataPane>
                <IconBar $height={33} $left={6}>
                  <Tools groups={editTools} />
                  <Path>Branch: Demand\Households\Rural\Electrified\Cooking\LPG stoves\...</Path>
                </IconBar>
                <FilterRow>
                  {filters.map((f, i) => (
                    <React.Fragment key={f.id}>
                      {i > 0 && <FilterSeparator />}
                      <FilterLabel htmlFor={f.id}>{f.label}</FilterLabel>
                      <SelectBox $width={f.width}>
                        <select id={f.id}><option>{f.value}</option></select>
                        <Svg w={12} h={8}><path d="M1 1l5 5 5-5" fill="none" stroke="#777" strokeWidth="1.300" /></Svg>
                      </SelectBox>
                    </React.Fragment>
                  ))}
                </FilterRow>
                <TabRow $inset={2}>
                  <TabButton>Activity Level</TabButton>
                  <TabButton>Final Energy Intensity</TabButton>
                  <TabButton $active>Avg Environmental Loading</TabButton>
                  <TabButton>All Variables</TabButton>
                </TabRow>
                <DataSheet>
                  <SheetColumn>
                    <Description>
                      Avg Environmental Loading: Environmental loading factor (average for all devices at branch) [Default="0"]
                      <HelpIcon />
                    </Description>
                    <Grid>
                      <colgroup>{columnWidths.map((w, i) => <col key={i} style={{ width: w }} />)}</colgroup>
                      <thead>
                        <tr><th />{columns.map((c) => <th key={c} scope="col">{c}</th>)}</tr>
                      </thead>
                      <tbody>
                        {rows.map(([branch, effect, expression, units, per], i) => (
                          <tr key={branch}>
                            <td>{i === 0 && <Svg w={9} h={14}><path d="M1 0v14l8-7z" fill="#000" /></Svg>}</td>
                            <th scope="row">{branch}</th>
                            <td>{effect}</td>
                            <Expression>{expression}</Expression>
                            <td>{units}</td>
                            <td>{per}</td>
                            <td>Per unit energy consumed</td>
                          </tr>
                        ))}
                      </tbody>
                    </Grid>
                  </SheetColumn>
                  <ScrollTrack><ScrollThumb /></ScrollTrack>
                </DataSheet>
              </DataPane>

              <HorizontalSplitter>
                <HorizontalGrip>
                  <Arrow d="M0 1h7L3.500 5z" /><i /><Arrow d="M0 1h7L3.500 5z" />
                </HorizontalGrip>
              </HorizontalSplitter>

              <ChartPane>
                <TabRow>
                  <TabButton $active><GlobeIcon />Chart</TabButton>
                  <TabButton $compact><TableTabIcon />Table</TabButton>
                  <TabButton $compact><Badge letter="E" fill="orange" />Builder</TabButton>
                  <TabButton $compact><NotesTabIcon />Notes</TabButton>
                  <TabButton $compact><Badge letter="E" fill="green" />Elaboration</TabButton>
                  <TabButton $compact><HelpIcon />Help</TabButton>
                </TabRow>
                <ChartBody>
                  <Chart />
                  <ChartTools>
                    <ToolButton $height={28} aria-label="Chart type"><PieMenuIcon /></ToolButton>
                    <ToolButton $height={28} aria-label="Stacking"><StackedIcon /></ToolButton>
                    <ToolButton $height={27} aria-label="Colors"><CubesIcon /></ToolButton>
                    <ToolButton $height={46}><span>LOG</span></ToolButton>
                    <ToolButton $height={36} $muted><span>3D</span></ToolButton>
                    <ToolGroup>
                      <ToolButton $pressed aria-label="Legend"><LegendIcon /></ToolButton>
                      <ToolButton aria-label="Grid lines"><HashIcon /></ToolButton>
                      <ToolButton aria-label="Decimals"><DecimalsIcon /></ToolButton>
                      <ToolButton aria-label="Rotate text"><RotateTextIcon /></ToolButton>
                      <ToolButton aria-label="Print"><PrinterIcon /></ToolButton>
                      <ToolButton aria-label="Copy"><CopyIcon tint="#6f72ad" paper="#dfe2f5" /></ToolButton>
                      <ToolButton aria-label="Slides"><SlidesIcon /></ToolButton>
                      <ToolButton aria-label="Save"><SaveIcon /></ToolButton>
                      <ToolButton aria-label="Options"><WrenchIcon /></ToolButton>
                    </ToolGroup>
                  </ChartTools>
                </ChartBody>
              </ChartPane>
            </Main>
          </Body>

          <Pointer width="17" height="26" viewBox="0 0 17 26" aria-hidden="true">
            <path d="M1 1v20l5-5 3 8 3-1.500-3-7.500h7z" fill="#fff" stroke="#222" strokeWidth="1.200" />
          </Pointer>

          <ImeBar>
            <i />CH
            <Svg w={18} h={20}><path d="M3 2h10l4 4v13H3z" fill="url(#paper)" stroke="#7fa5d6" /><path d="M1 8l4 5 6-11" fill="none" stroke="#e0412a" strokeWidth="2.500" /></Svg>
            <Svg w={20} h={20}><path d="M2 3l15-2 2 15-15 3z" fill="#e8501c" /><path d="M15 5C9 3 5 7 8 9s6 1 5 4-5 3-7 1" fill="none" stroke="#fff" strokeWidth="2.500" /></Svg>
            <Svg w={12} h={20}><rect x="1" y="1" width="10" height="5" rx="2" fill="none" stroke="#555" strokeWidth="1.300" /><path d="M1 14v4h10v-4" fill="none" stroke="#345" strokeWidth="2" strokeDasharray="5 3" /></Svg>
          </ImeBar>
        </Window>
      </Screen>
    </>
  );
}
